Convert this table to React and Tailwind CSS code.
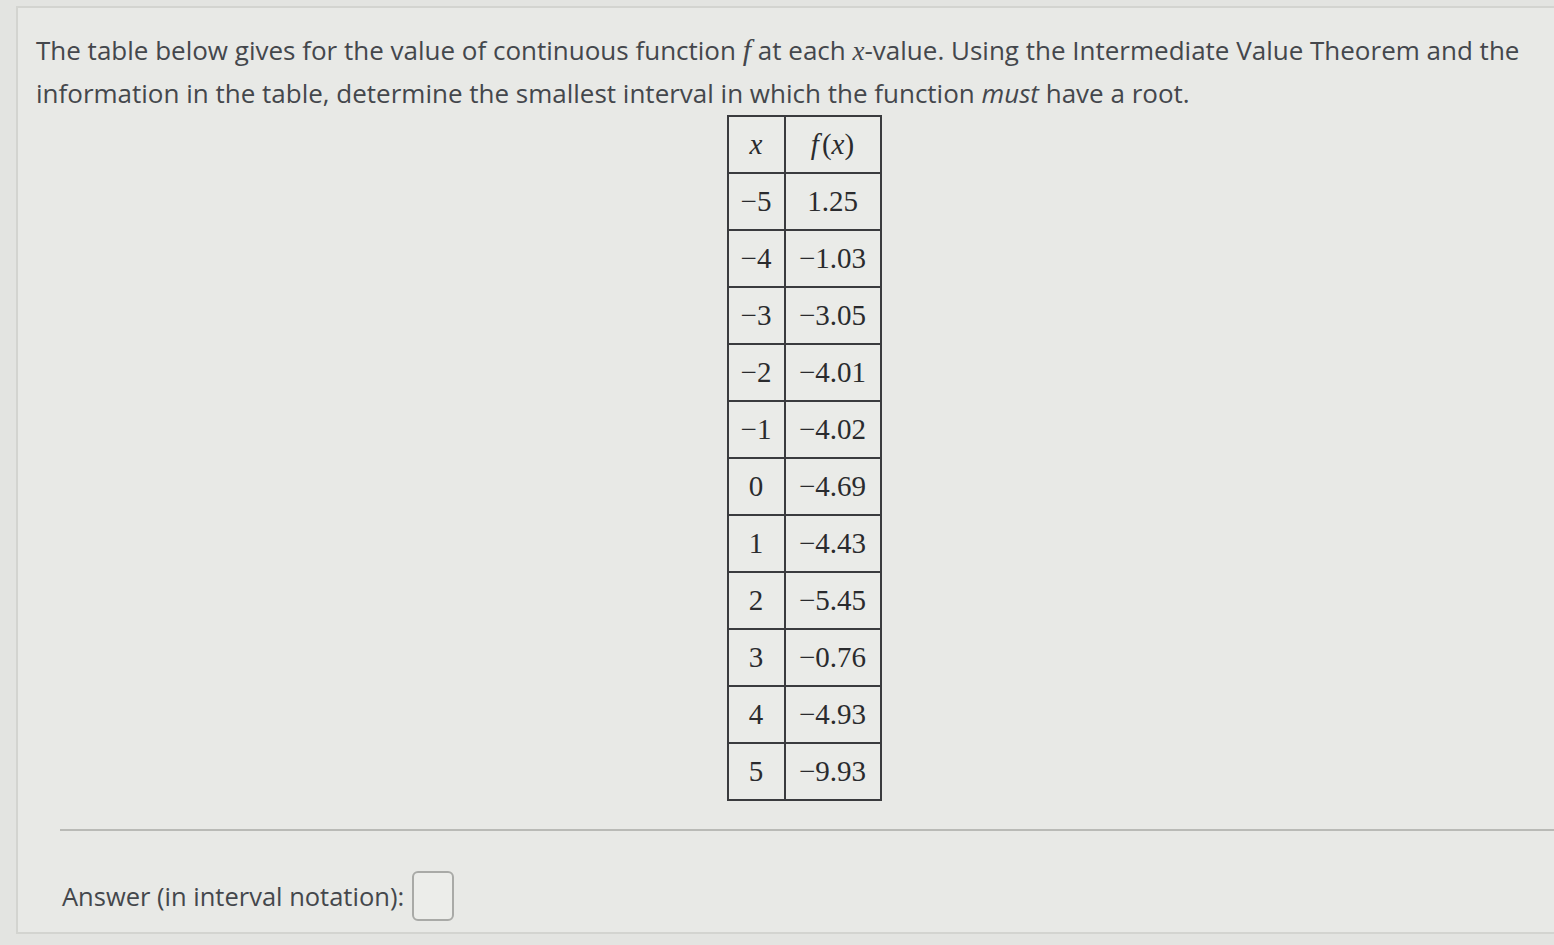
const rows = [
  ["\u22125", "1.25"],
  ["\u22124", "\u22121.03"],
  ["\u22123", "\u22123.05"],
  ["\u22122", "\u22124.01"],
  ["\u22121", "\u22124.02"],
  ["0", "\u22124.69"],
  ["1", "\u22124.43"],
  ["2", "\u22125.45"],
  ["3", "\u22120.76"],
  ["4", "\u22124.93"],
  ["5", "\u22129.93"],
];

export default function App() {
  return (
    <div className="w-[1554px] h-[945px] overflow-hidden bg-[#e3e4e1] pl-[16px] pt-[6px]">
      <div className="h-[928px] border-l-2 border-t-2 border-b-2 border-[#d3d4d0] bg-[#e8e9e6] pl-[18px] pt-[21px] font-['Open_Sans',sans-serif] text-[#44474c]">
        <p className="text-[26px] leading-[42px] whitespace-nowrap">
          The table below gives for the value of continuous function{" "}
          <span className="font-['Liberation_Serif',serif] italic text-[30px]">f</span> at each{" "}
          <span className="font-['Liberation_Serif',serif] italic text-[27px]">x</span>-value. Using the Intermediate Value
          Theorem and the
          <br />
          information in the table, determine the smallest interval in which the function <em>must</em> have a root.
        </p>

        <div className="flex justify-center pl-[18px] mt-[1px]">
          <table className="border-collapse font-['Liberation_Serif',serif] text-[29px] text-[#2a2b2e] bg-[#eaebe8]">
            <thead>
              <tr className="h-[57px]">
                <th className="border-2 border-[#3a3b3e] w-[57px] font-normal italic">x</th>
                <th className="border-2 border-[#3a3b3e] w-[96px] font-normal">
                  <span className="italic mr-[3px]">f</span>(<span className="italic">x</span>)
                </th>
              </tr>
            </thead>
            <tbody>
              {rows.map(([x, y]) => (
                <tr key={x} className="h-[57px]">
                  <td className="border-2 border-[#3a3b3e] text-center">{x}</td>
                  <td className="border-2 border-[#3a3b3e] text-center">{y}</td>
                </tr>
              ))}
            </tbody>
          </table>
        </div>

        <div className="ml-[24px] mt-[28px] border-t-2 border-[#b9bab6]" />

        <div className="flex items-center ml-[26px] mt-[40px] gap-[8px]">
          <span className="text-[25.5px]">Answer (in interval notation):</span>
          <div className="w-[42px] h-[50px] rounded-[6px] border-2 border-[#a9aaa7] bg-[#ecedea]" />
        </div>
      </div>
    </div>
  );
}
